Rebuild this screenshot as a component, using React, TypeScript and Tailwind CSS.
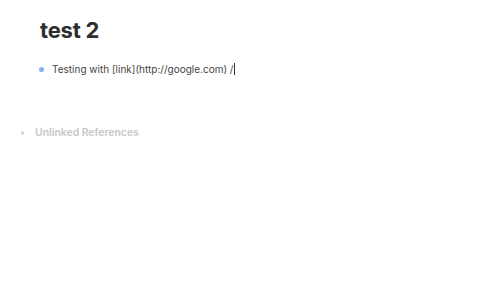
import React from "react";

export default function App() {
  return (
    <div className="w-[500px] h-[284px] bg-white relative overflow-hidden" style={{ fontFamily: "Inter, 'Noto Sans', sans-serif" }}>
      <div className="pl-[40px] pt-[16px]">
        <h1 className="text-[22px] leading-[28px] font-bold text-[#2e2e2e] tracking-[-0.2px]">test 2</h1>
        <div className="flex items-center mt-[17px] h-[16px]">
          <span className="w-[5px] h-[5px] rounded-full bg-[#86b0ec] ml-[-1px]" />
          <span className="ml-[8px] text-[10px] text-[#444] leading-[16px]">
            Testing with [link](http://google.com) /
          </span>
          <span className="w-[1px] h-[12px] bg-[#333] ml-[1px]" />
        </div>
      </div>
      <div className="flex items-center pl-[20px] mt-[49px] h-[14px]">
        <svg width="6" height="6" viewBox="0 0 6 6"><path d="M1.5 0.8 L4.5 3 L1.5 5.2 Z" fill="#c8c8c8" /></svg>
        <span className="ml-[9px] text-[10.4px] font-semibold text-[#c8c8c8]">Unlinked References</span>
      </div>
    </div>
  );
}
